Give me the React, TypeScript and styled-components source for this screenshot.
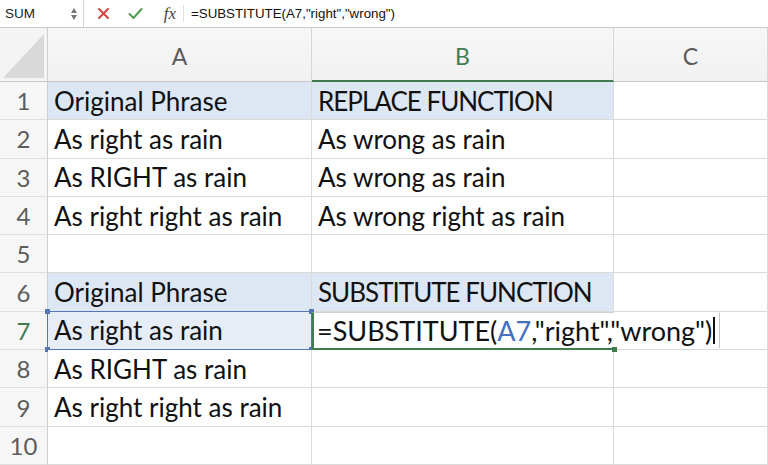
import styled, { createGlobalStyle } from "styled-components";

const GlobalStyle = createGlobalStyle`
  html, body {
    margin: 0;
    padding: 0;
    background: #ffffff;
    overflow: hidden;
  }
  body {
    font-family: "Liberation Sans", Arial, sans-serif;
  }
`;

const Page = styled.div`
  width: 768px;
  height: 465px;
  display: flex;
  flex-direction: column;
`;

const FormulaBar = styled.div`
  height: 27px;
  display: flex;
  align-items: center;
  border-bottom: 1px solid #c9c9c9;
  background: #ffffff;
`;

const NameBox = styled.div`
  width: 84px;
  height: 100%;
  box-sizing: border-box;
  display: flex;
  align-items: center;
  justify-content: space-between;
  padding: 0 6px 0 5px;
  border-right: 1px solid #d4d4d4;
  font-size: 13.5px;
  color: #222;
`;

const Spinner = styled.div`
  display: flex;
  flex-direction: column;
  gap: 2px;
`;

const Arrow = styled.div<{ $up?: boolean }>`
  width: 0;
  height: 0;
  border-left: 3.5px solid transparent;
  border-right: 3.5px solid transparent;
  ${(p) =>
    p.$up ? "border-bottom: 5px solid #777;" : "border-top: 5px solid #777;"}
`;

const Tools = styled.div`
  display: flex;
  align-items: center;
  height: 100%;
  padding-left: 3px;
`;

const ToolIcon = styled.div`
  width: 32px;
  display: flex;
  justify-content: center;
  align-items: center;
`;

const Fx = styled.div`
  width: 26px;
  height: 17px;
  display: flex;
  align-items: center;
  justify-content: center;
  font-family: "Liberation Serif", "Times New Roman", serif;
  font-style: italic;
  font-size: 17px;
  color: #444;
  border-right: 1px solid #e0e0e0;
  margin-left: 6px;
`;

const FormulaText = styled.div`
  padding-left: 7px;
  font-size: 13.3px;
  color: #111;
  white-space: nowrap;
`;

const Sheet = styled.div`
  flex: 1;
  display: grid;
  grid-template-columns: 48px 264px 302px 1fr;
  grid-template-rows: 54px repeat(10, 38.3px);
  font-family: "Lato", "Liberation Sans", sans-serif;
`;

const Corner = styled.div`
  position: relative;
  background: #f4f4f4;
  border-right: 1px solid #cfcfcf;
  border-bottom: 1px solid #c6c6c6;
`;

const CornerTriangle = styled.div`
  position: absolute;
  right: 3px;
  bottom: 3px;
  width: 0;
  height: 0;
  border-left: 41px solid transparent;
  border-bottom: 44px solid #d9d9d9;
`;

const ColHeader = styled.div<{ $active?: boolean }>`
  display: flex;
  align-items: center;
  justify-content: center;
  background: linear-gradient(#f7f7f7, #f1f1f1);
  border-right: 1px solid #d6d6d6;
  border-bottom: ${(p) => (p.$active ? "2px solid #3f7d4f" : "1px solid #c6c6c6")};
  font-size: 23px;
  color: ${(p) => (p.$active ? "#3f7d4f" : "#5a5a5a")};
  padding-top: 3px;
  box-sizing: border-box;
`;

const RowNum = styled.div<{ $active?: boolean }>`
  display: flex;
  align-items: center;
  justify-content: center;
  background: #f6f6f6;
  border-right: 1px solid #cfcfcf;
  border-bottom: 1px solid #dedede;
  font-size: 24px;
  color: ${(p) => (p.$active ? "#3f7d4f" : "#5c5c5c")};
`;

const Cell = styled.div<{ $fill?: "head" | "sel"; $caps?: boolean }>`
  position: relative;
  display: flex;
  align-items: center;
  padding-left: 6px;
  box-sizing: border-box;
  border-right: 1px solid #dadada;
  border-bottom: 1px solid #dadada;
  font-size: 26px;
  letter-spacing: ${(p) => (p.$caps ? "-1px" : "0")};
  color: #111;
  white-space: nowrap;
  background: ${(p) =>
    p.$fill === "head" ? "#dde7f4" : p.$fill === "sel" ? "#e6edf7" : "#ffffff"};
`;

const RefBox = styled.div`
  position: absolute;
  left: -1px;
  top: -1px;
  right: -1px;
  bottom: -1px;
  border: 1px solid #5576b3;
  pointer-events: none;
`;

const Handle = styled.div<{ $x: "l" | "r"; $y: "t" | "b"; $color: string }>`
  position: absolute;
  width: 5px;
  height: 5px;
  background: ${(p) => p.$color};
  ${(p) => (p.$x === "l" ? "left: -3px;" : "right: -3px;")}
  ${(p) => (p.$y === "t" ? "top: -3px;" : "bottom: -3px;")}
`;

const EditCell = styled.div`
  position: relative;
  z-index: 2;
  display: flex;
  align-items: center;
  box-sizing: border-box;
  border-left: 2px solid #3f7d4f;
  border-bottom: 2px solid #3f7d4f;
  border-top: 1px solid #c9d3c9;
  overflow: visible;
`;

const EditText = styled.div`
  display: flex;
  align-items: center;
  height: 100%;
  background: #ffffff;
  padding-left: 3px;
  padding-right: 4px;
  border-right: 1px solid #c4c4c4;
  font-size: 27px;
  color: #111;
  white-space: nowrap;
`;

const Ref = styled.span`
  color: #4571c0;
`;

const Caret = styled.span`
  display: inline-block;
  width: 1.5px;
  height: 27px;
  background: #111;
  margin-left: 1px;
`;

const FillHandle = styled.div`
  position: absolute;
  right: -3px;
  bottom: -4px;
  width: 5px;
  height: 5px;
  background: #3f7d4f;
`;

const rows: [string, string, "head" | undefined][] = [
  ["Original Phrase", "REPLACE FUNCTION", "head"],
  ["As right as rain", "As wrong as rain", undefined],
  ["As RIGHT as rain", "As wrong as rain", undefined],
  ["As right right as rain", "As wrong right as rain", undefined],
  ["", "", undefined],
  ["Original Phrase", "SUBSTITUTE FUNCTION", "head"],
];

const tail = ["As RIGHT as rain", "As right right as rain", ""];

function CancelIcon() {
  return (
    <svg width="13" height="13" viewBox="0 0 13 13">
      <path d="M2 2 L11 11 M11 2 L2 11" stroke="#d0453f" strokeWidth="2" strokeLinecap="round" />
    </svg>
  );
}

function ConfirmIcon() {
  return (
    <svg width="15" height="13" viewBox="0 0 15 13">
      <path d="M1.5 7 L5.5 11 L13.5 2" stroke="#4e9e52" strokeWidth="2" fill="none" strokeLinecap="round" strokeLinejoin="round" />
    </svg>
  );
}

export default function App() {
  return (
    <Page>
      <GlobalStyle />
      <FormulaBar>
        <NameBox>
          <span>SUM</span>
          <Spinner>
            <Arrow $up />
            <Arrow />
          </Spinner>
        </NameBox>
        <Tools>
          <ToolIcon>
            <CancelIcon />
          </ToolIcon>
          <ToolIcon>
            <ConfirmIcon />
          </ToolIcon>
          <Fx>fx</Fx>
        </Tools>
        <FormulaText>=SUBSTITUTE(A7,"right","wrong")</FormulaText>
      </FormulaBar>

      <Sheet>
        <Corner>
          <CornerTriangle />
        </Corner>
        <ColHeader>A</ColHeader>
        <ColHeader $active>B</ColHeader>
        <ColHeader>C</ColHeader>

        {rows.map(([a, b, fill], i) => (
          <>
            <RowNum key={`n${i}`}>{i + 1}</RowNum>
            <Cell key={`a${i}`} $fill={fill}>{a}</Cell>
            <Cell key={`b${i}`} $fill={fill} $caps={fill === "head"}>{b}</Cell>
            <Cell key={`c${i}`} />
          </>
        ))}

        <RowNum $active>7</RowNum>
        <Cell $fill="sel">
          As right as rain
          <RefBox>
            <Handle $x="l" $y="t" $color="#5576b3" />
            <Handle $x="r" $y="t" $color="#5576b3" />
            <Handle $x="l" $y="b" $color="#5576b3" />
            <Handle $x="r" $y="b" $color="#5576b3" />
          </RefBox>
        </Cell>
        <EditCell>
          <EditText>
            =SUBSTITUTE(<Ref>A7</Ref>,"right","wrong")
            <Caret />
          </EditText>
          <FillHandle />
        </EditCell>
        <Cell />

        {tail.map((a, i) => (
          <>
            <RowNum key={`tn${i}`}>{i + 8}</RowNum>
            <Cell key={`ta${i}`}>{a}</Cell>
            <Cell key={`tb${i}`} />
            <Cell key={`tc${i}`} />
          </>
        ))}
      </Sheet>
    </Page>
  );
}
